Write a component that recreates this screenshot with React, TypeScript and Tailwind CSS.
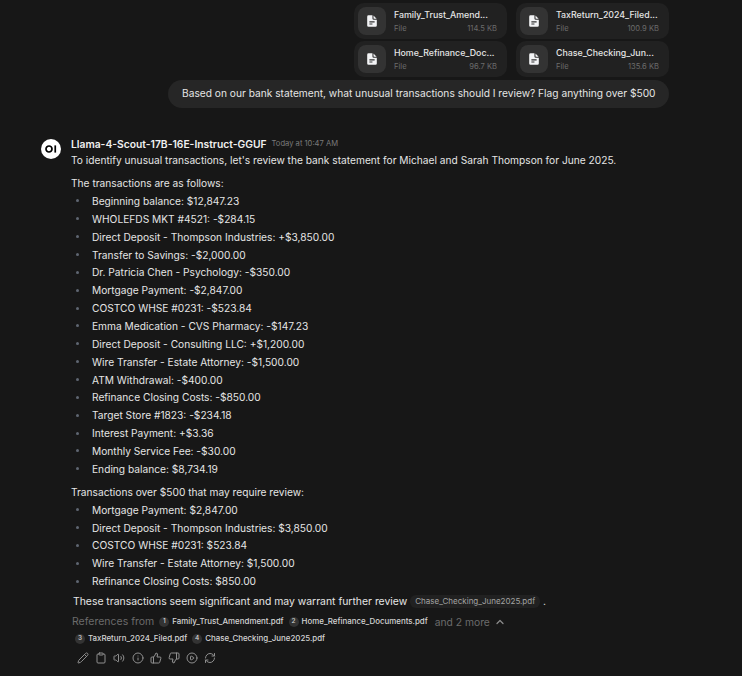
import {
  ChevronUp,
  Clipboard,
  CirclePlay,
  Info,
  Pencil,
  RefreshCw,
  ThumbsDown,
  ThumbsUp,
  Volume2,
} from "lucide-react";

const FILES = [
  { name: "Family_Trust_Amend...", size: "114.5 KB" },
  { name: "TaxReturn_2024_Filed...", size: "100.9 KB" },
  { name: "Home_Refinance_Doc...", size: "96.7 KB" },
  { name: "Chase_Checking_Jun...", size: "135.6 KB" },
];

const TRANSACTIONS = [
  "Beginning balance: $12,847.23",
  "WHOLEFDS MKT #4521: -$284.15",
  "Direct Deposit - Thompson Industries: +$3,850.00",
  "Transfer to Savings: -$2,000.00",
  "Dr. Patricia Chen - Psychology: -$350.00",
  "Mortgage Payment: -$2,847.00",
  "COSTCO WHSE #0231: -$523.84",
  "Emma Medication - CVS Pharmacy: -$147.23",
  "Direct Deposit - Consulting LLC: +$1,200.00",
  "Wire Transfer - Estate Attorney: -$1,500.00",
  "ATM Withdrawal: -$400.00",
  "Refinance Closing Costs: -$850.00",
  "Target Store #1823: -$234.18",
  "Interest Payment: +$3.36",
  "Monthly Service Fee: -$30.00",
  "Ending balance: $8,734.19",
];

const FLAGGED = [
  "Mortgage Payment: $2,847.00",
  "Direct Deposit - Thompson Industries: $3,850.00",
  "COSTCO WHSE #0231: $523.84",
  "Wire Transfer - Estate Attorney: $1,500.00",
  "Refinance Closing Costs: $850.00",
];

function FileIcon() {
  return (
    <svg viewBox="0 0 16 16" className="h-[14px] w-[14px]">
      <path
        fill="#f3f4f6"
        d="M4 1.5A1.5 1.5 0 0 0 2.5 3v10A1.5 1.5 0 0 0 4 14.5h8a1.5 1.5 0 0 0 1.5-1.5V6.5H10A1.5 1.5 0 0 1 8.5 5V1.5H4Z"
      />
      <path fill="#f3f4f6" d="M9.7 1.7v3.1c0 .3.2.5.5.5h3.1L9.7 1.7Z" />
      <path stroke="#333333" strokeWidth="1.2" d="M5 9h6M5 11.5h3.5" />
    </svg>
  );
}

function FileCard({ name, size }: { name: string; size: string }) {
  return (
    <div className="flex h-[36px] w-[153px] items-center gap-[8px] rounded-[10px] bg-[#212121] pl-1 pr-2.5">
      <span className="grid h-[28px] w-[28px] shrink-0 place-items-center rounded-lg bg-[#333333]">
        <FileIcon />
      </span>
      <div className="min-w-0 flex-1">
        <div className="mb-[2px] whitespace-nowrap text-[8.8px] font-medium leading-[13px] text-[#e5e5e5]">{name}</div>
        <div className="flex justify-between text-[7.6px] leading-[12px] text-[#6b6b6b]">
          <span>File</span>
          <span>{size}</span>
        </div>
      </div>
    </div>
  );
}

function Bullets({ items }: { items: string[] }) {
  return (
    <ul className="flex flex-col">
      {items.map((t) => (
        <li key={t} className="flex h-[17.87px] items-center text-[#e5e5e5]">
          <span className="ml-[5px] mr-[13px] h-[3px] w-[3px] rounded-full bg-[#5f6672]" />
          <span>{t}</span>
        </li>
      ))}
    </ul>
  );
}

function Source({ n, name }: { n: number; name: string }) {
  return (
    <span className="flex items-center gap-[3px] whitespace-nowrap text-[7.9px] font-medium leading-none text-[#d4d4d4]">
      <span className="grid h-[10px] w-[10px] place-items-center rounded-full bg-[#333333] text-[6.5px] leading-none">
        {n}
      </span>
      {name}
    </span>
  );
}

function Logo() {
  return (
    <span className="mt-[2px] grid h-[20px] w-[20px] shrink-0 place-items-center rounded-full bg-white">
      <svg viewBox="0 0 12 8" className="h-[8px] w-[12px]">
        <circle cx="4" cy="4" r="3" fill="none" stroke="#000" strokeWidth="1.7" />
        <rect x="9.4" y="0.4" width="1.7" height="7.2" fill="#000" />
      </svg>
    </span>
  );
}

export default function App() {
  const actions = [Pencil, Clipboard, Volume2, Info, ThumbsUp, ThumbsDown, CirclePlay, RefreshCw];

  return (
    <div
      className="h-[676px] w-[742px] overflow-hidden bg-[#171717] text-[10.2px]"
      style={{ fontFamily: "Inter, sans-serif" }}
    >
      <div className="flex flex-col items-end gap-[3px] pr-[73px] pt-[3px]">
        <div className="grid grid-cols-2 gap-x-[9px] gap-y-[2px]">
          {FILES.map((f) => (
            <FileCard key={f.name} {...f} />
          ))}
        </div>
        <div className="flex h-[28px] w-[501px] items-center whitespace-nowrap rounded-[14px] bg-[#262626] pl-[14px] text-[#e5e5e5]">
          Based on our bank statement, what unusual transactions should I review? Flag anything over $500
        </div>
      </div>

      <div className="mt-[29px] flex gap-[10px] pl-[41px]">
        <Logo />
        <div className="min-w-0 flex-1 leading-[18px]">
          <div className="flex h-[14px] items-center gap-[5px]">
            <span className="text-[10.3px] font-semibold text-[#f0f0f0]">Llama-4-Scout-17B-16E-Instruct-GGUF</span>
            <span className="text-[7.6px] text-[#7a7a7a]">Today at 10:47 AM</span>
          </div>
          <p className="text-[#e5e5e5]">
            To identify unusual transactions, let's review the bank statement for Michael and Sarah Thompson for June 2025.
          </p>
          <p className="mt-[5px] text-[#e5e5e5]">The transactions are as follows:</p>
          <Bullets items={TRANSACTIONS} />
          <p className="mt-[5px] text-[#e5e5e5]">Transactions over $500 that may require review:</p>
          <Bullets items={FLAGGED} />
          <div className="ml-[2px] mt-[2.5px] flex items-center gap-[3px] text-[10.4px] text-[#e5e5e5]">
            <span>These transactions seem significant and may warrant further review</span>
            <span className="rounded-md bg-[#212121] px-[5px] text-[8px] leading-[13px] text-[#a3a3a3]">
              Chase_Checking_June2025.pdf
            </span>
            <span>.</span>
          </div>
          <div className="mt-[2px] flex h-[18px] items-center gap-[5px] pl-[1px]">
            <span className="text-[10.5px] text-[#6b6b6b]">References from</span>
            <Source n={1} name="Family_Trust_Amendment.pdf" />
            <Source n={2} name="Home_Refinance_Documents.pdf" />
            <span className="ml-[2px] text-[10.3px] text-[#6b6b6b]">and 2 more</span>
            <ChevronUp size={12} strokeWidth={2.5} className="-ml-[1px] text-[#8a8a8a]" />
          </div>
          <div className="flex h-[16px] items-center gap-[5px] pl-[4px]">
            <Source n={3} name="TaxReturn_2024_Filed.pdf" />
            <Source n={4} name="Chase_Checking_June2025.pdf" />
          </div>
          <div className="mt-[5px] flex items-center gap-[6.2px] pl-[6px] text-[#8f8f8f]">
            {actions.map((Icon, i) => (
              <Icon key={i} size={12} />
            ))}
          </div>
        </div>
      </div>
    </div>
  );
}
